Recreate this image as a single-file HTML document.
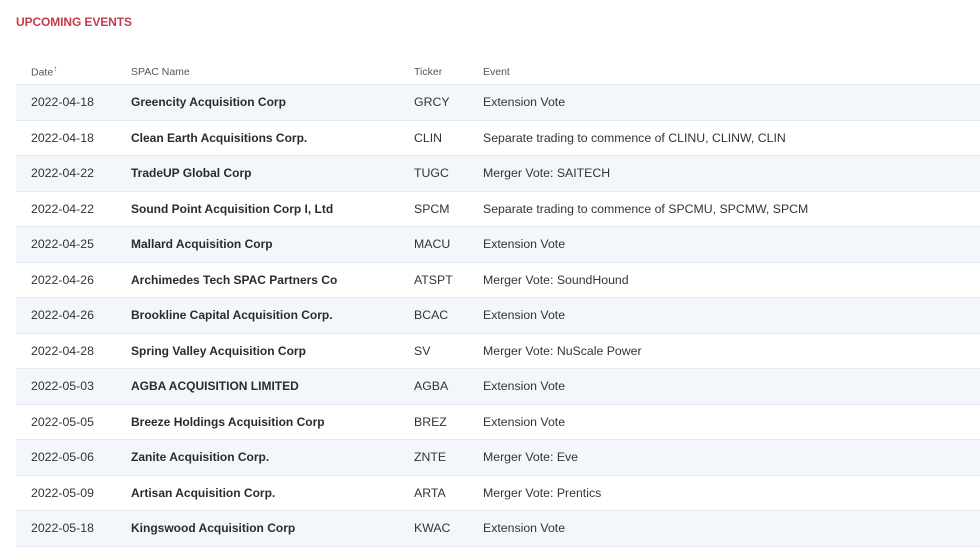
<!DOCTYPE html>
<html><head><meta charset="utf-8"><style>
body{margin:0;width:980px;height:545px;overflow:hidden;background:#fff;font-family:"Liberation Sans",sans-serif;color:#333;}
.t{position:absolute;left:16px;top:15px;font-size:12px;color:#c73a4b;font-weight:bold;letter-spacing:-0.1px}
table{position:absolute;left:16px;top:59px;width:964px;border-collapse:collapse;font-size:12.3px}
th{font-weight:normal;font-size:10.5px;color:#555;text-align:left;height:25px;border-bottom:1px solid #dfe6ef;padding:0}
td{height:34.5px;padding:0;border-bottom:1px solid #e3e9f1}
tr.a td{background:#f3f7fc}
.c1{padding-left:15px;width:100px}.c2{width:283px}.c3{width:69px}
td.c2{font-weight:bold;color:#2b2b2b;font-size:12px}
</style></head><body>
<div class="t">UPCOMING EVENTS</div>
<table>
<tr><th class="c1">Date<sup style="font-size:8px">↑</sup></th><th class="c2">SPAC Name</th><th class="c3">Ticker</th><th>Event</th></tr>
<tr class="a"><td class="c1">2022-04-18</td><td class="c2">Greencity Acquisition Corp</td><td>GRCY</td><td>Extension Vote</td></tr>
<tr><td class="c1">2022-04-18</td><td class="c2">Clean Earth Acquisitions Corp.</td><td>CLIN</td><td>Separate trading to commence of CLINU, CLINW, CLIN</td></tr>
<tr class="a"><td class="c1">2022-04-22</td><td class="c2">TradeUP Global Corp</td><td>TUGC</td><td>Merger Vote: SAITECH</td></tr>
<tr><td class="c1">2022-04-22</td><td class="c2">Sound Point Acquisition Corp I, Ltd</td><td>SPCM</td><td>Separate trading to commence of SPCMU, SPCMW, SPCM</td></tr>
<tr class="a"><td class="c1">2022-04-25</td><td class="c2">Mallard Acquisition Corp</td><td>MACU</td><td>Extension Vote</td></tr>
<tr><td class="c1">2022-04-26</td><td class="c2">Archimedes Tech SPAC Partners Co</td><td>ATSPT</td><td>Merger Vote: SoundHound</td></tr>
<tr class="a"><td class="c1">2022-04-26</td><td class="c2">Brookline Capital Acquisition Corp.</td><td>BCAC</td><td>Extension Vote</td></tr>
<tr><td class="c1">2022-04-28</td><td class="c2">Spring Valley Acquisition Corp</td><td>SV</td><td>Merger Vote: NuScale Power</td></tr>
<tr class="a"><td class="c1">2022-05-03</td><td class="c2">AGBA ACQUISITION LIMITED</td><td>AGBA</td><td>Extension Vote</td></tr>
<tr><td class="c1">2022-05-05</td><td class="c2">Breeze Holdings Acquisition Corp</td><td>BREZ</td><td>Extension Vote</td></tr>
<tr class="a"><td class="c1">2022-05-06</td><td class="c2">Zanite Acquisition Corp.</td><td>ZNTE</td><td>Merger Vote: Eve</td></tr>
<tr><td class="c1">2022-05-09</td><td class="c2">Artisan Acquisition Corp.</td><td>ARTA</td><td>Merger Vote: Prentics</td></tr>
<tr class="a"><td class="c1">2022-05-18</td><td class="c2">Kingswood Acquisition Corp</td><td>KWAC</td><td>Extension Vote</td></tr>
</table>
</body></html>
